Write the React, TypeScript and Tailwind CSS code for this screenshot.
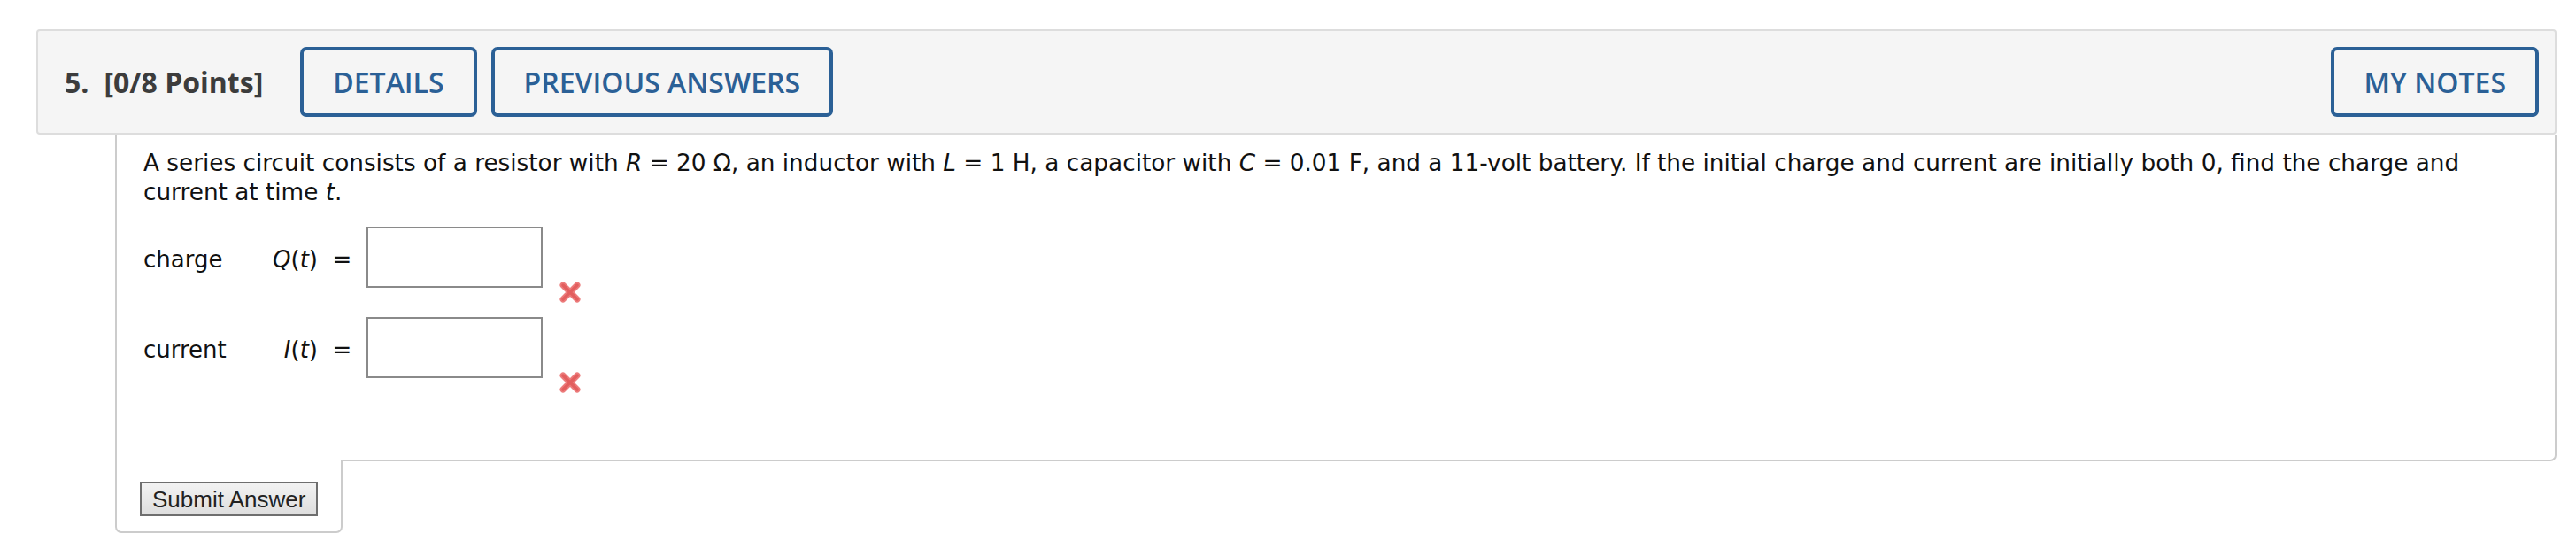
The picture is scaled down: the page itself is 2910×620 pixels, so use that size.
import React from 'react'

const Cross = () => {
  return (
    <svg width="26" height="26" viewBox="0 0 26 26">
      <path d="M5 5 L21 21 M21 5 L5 21" stroke="#ec7b7b" strokeWidth="7" strokeLinecap="round" />
      <path d="M5 5 L21 21 M21 5 L5 21" stroke="#e25e5e" strokeWidth="3.5" strokeLinecap="round" />
    </svg>
  )
}

const HeadButton = ({ label }: { label: string }) => {
  return (
    <button className="h-[79px] px-[33px] border-4 border-[#2b6096] rounded-[7px] text-[#2b6096] text-[32px] font-semibold tracking-normal">
      {label}
    </button>
  )
}

const AnswerRow = ({ label, math }: { label: string; math: React.ReactNode }) => {
  return (
    <div className="flex items-start h-[87px]">
      <div className="w-[139px] h-[69px] pt-[5px] flex items-center">{label}</div>
      <div className="w-[58px] h-[69px] pt-[5px] flex items-center justify-end">{math}</div>
      <div className="w-[55px] h-[69px] pt-[5px] flex items-center justify-center">=</div>
      <input type="text" className="w-[199px] h-[69px] border-2 border-[#8a8a8a] bg-white outline-none" />
      <div className="ml-[18px] mt-[61px]">
        <Cross />
      </div>
    </div>
  )
}

const App = () => {
  return (
    <div className="w-[2910px] h-[620px] bg-white pt-[33px] pl-[41px]">
      <div className="w-[2847px]">
        {/* question header */}
        <div className="flex items-center py-[18px] pl-[30px] pr-[18px] bg-[#f5f5f5] border-2 border-[#dddddd] rounded-[4px] font-['Open_Sans',sans-serif]">
          <span className="text-[32px] font-bold text-[#3c3c3c]">5.</span>
          <span className="ml-[17px] text-[32px] font-bold text-[#3c3c3c]">[0/8 Points]</span>
          <div className="ml-[42px] flex gap-[16px]">
            <HeadButton label="DETAILS" />
            <HeadButton label="PREVIOUS ANSWERS" />
          </div>
          <div className="ml-auto">
            <HeadButton label="MY NOTES" />
          </div>
        </div>

        {/* question body */}
        <div className="ml-[89px] font-['DejaVu_Sans',Verdana,sans-serif] text-[26px] text-[#111]">
          <div className="border-x-2 border-b-2 border-[#cccccc] rounded-br-[7px] pt-[16px] pl-[30px] pr-[30px] pb-[74px]">
            <p className="leading-[33px] text-[26.3px]">
              A series circuit consists of a resistor with <i>R</i> = 20 Ω, an inductor with <i>L</i> = 1 H, a capacitor with <i>C</i> = 0.01 F, and a 11-volt battery. If the initial charge and current are initially both 0, find the charge and current at time <i>t</i>.
            </p>
            <div className="mt-[22px]">
              <AnswerRow label="charge" math={<span><i>Q</i>(<i>t</i>)</span>} />
              <div className="mt-[15px]">
                <AnswerRow label="current" math={<span><i>I</i>(<i>t</i>)</span>} />
              </div>
            </div>
          </div>
          <div className="-mt-[2px] w-[257px] bg-white border-x-2 border-b-2 border-[#cccccc] rounded-b-[7px] pt-[25px] pb-[16px] pl-[26px]">
            <button className="h-[39px] px-[12px] border-2 border-[#6e6e6e] bg-gradient-to-b from-[#f2f2f2] to-[#dedede] text-[26px] leading-none text-[#222] font-['Liberation_Sans',Arial,sans-serif]">
              Submit Answer
            </button>
          </div>
        </div>
      </div>
    </div>
  )
}

export default App
